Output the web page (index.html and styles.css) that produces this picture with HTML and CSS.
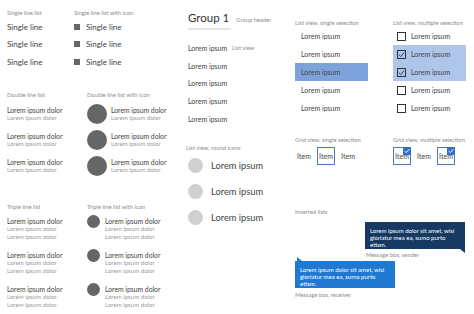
FILE: index.html
```html
<!DOCTYPE html>
<html lang="en">
<head>
    <meta charset="UTF-8">
    <title>List controls</title>
    <link rel="stylesheet" href="styles.css">
</head>
<body>
    <div class="col col-lists">
        <div class="section single">
            <div class="sub">
                <div class="label">Single line list</div>
                <div class="s-item">Single line</div>
                <div class="s-item">Single line</div>
                <div class="s-item">Single line</div>
            </div>
            <div class="sub sub-icon-sq">
                <div class="label">Single line list with icon</div>
                <div class="s-item"><span class="sq"></span>Single line</div>
                <div class="s-item"><span class="sq"></span>Single line</div>
                <div class="s-item"><span class="sq"></span>Single line</div>
            </div>
        </div>

        <div class="section double">
            <div class="sub">
                <div class="label">Double line list</div>
                <div class="d-item"><div><div class="t1">Lorem ipsum dolor</div><div class="t2">Lorem ipsum dolor</div></div></div>
                <div class="d-item"><div><div class="t1">Lorem ipsum dolor</div><div class="t2">Lorem ipsum dolor</div></div></div>
                <div class="d-item"><div><div class="t1">Lorem ipsum dolor</div><div class="t2">Lorem ipsum dolor</div></div></div>
            </div>
            <div class="sub sub-icon">
                <div class="label">Double line list with icon</div>
                <div class="d-item"><span class="dot big"></span><div><div class="t1">Lorem ipsum dolor</div><div class="t2">Lorem ipsum dolor</div></div></div>
                <div class="d-item"><span class="dot big"></span><div><div class="t1">Lorem ipsum dolor</div><div class="t2">Lorem ipsum dolor</div></div></div>
                <div class="d-item"><span class="dot big"></span><div><div class="t1">Lorem ipsum dolor</div><div class="t2">Lorem ipsum dolor</div></div></div>
            </div>
        </div>

        <div class="section triple">
            <div class="sub">
                <div class="label">Triple line list</div>
                <div class="t-item"><div><div class="t1">Lorem ipsum dolor</div><div class="t2">Lorem ipsum dolor</div><div class="t2">Lorem ipsum dolor</div></div></div>
                <div class="t-item"><div><div class="t1">Lorem ipsum dolor</div><div class="t2">Lorem ipsum dolor</div><div class="t2">Lorem ipsum dolor</div></div></div>
                <div class="t-item"><div><div class="t1">Lorem ipsum dolor</div><div class="t2">Lorem ipsum dolor</div><div class="t2">Lorem ipsum dolor</div></div></div>
            </div>
            <div class="sub sub-icon">
                <div class="label">Triple line list with icon</div>
                <div class="t-item"><span class="dot small"></span><div><div class="t1">Lorem ipsum dolor</div><div class="t2">Lorem ipsum dolor</div><div class="t2">Lorem ipsum dolor</div></div></div>
                <div class="t-item"><span class="dot small"></span><div><div class="t1">Lorem ipsum dolor</div><div class="t2">Lorem ipsum dolor</div><div class="t2">Lorem ipsum dolor</div></div></div>
                <div class="t-item"><span class="dot small"></span><div><div class="t1">Lorem ipsum dolor</div><div class="t2">Lorem ipsum dolor</div><div class="t2">Lorem ipsum dolor</div></div></div>
            </div>
        </div>
    </div>

    <div class="col col-group">
        <div class="group-head">
            <div class="group-title">Group 1</div>
            <div class="label">Group header</div>
        </div>
        <div class="list-view">
            <div class="lv-items">
                <div class="lv-item">Lorem ipsum</div>
                <div class="lv-item">Lorem ipsum</div>
                <div class="lv-item">Lorem ipsum</div>
                <div class="lv-item">Lorem ipsum</div>
                <div class="lv-item">Lorem ipsum</div>
            </div>
            <div class="label">List view</div>
        </div>
        <div class="round-list">
            <div class="label">List view, round icons</div>
            <div class="r-item"><span class="r-dot"></span>Lorem ipsum</div>
            <div class="r-item"><span class="r-dot"></span>Lorem ipsum</div>
            <div class="r-item"><span class="r-dot"></span>Lorem ipsum</div>
        </div>
    </div>

    <div class="col col-select">
        <div class="select-row">
            <div class="sel single-sel">
                <div class="label">List view, single selection</div>
                <div class="sel-item">Lorem ipsum</div>
                <div class="sel-item">Lorem ipsum</div>
                <div class="sel-item active">Lorem ipsum</div>
                <div class="sel-item">Lorem ipsum</div>
                <div class="sel-item">Lorem ipsum</div>
            </div>
            <div class="sel multi-sel">
                <div class="label">List view, multiple selection</div>
                <div class="sel-item"><span class="cb"></span>Lorem ipsum</div>
                <div class="sel-item picked"><span class="cb"><svg viewBox="0 0 10 10"><path d="M2 5.2 L4.2 7.3 L8 2.8" fill="none" stroke="#2b3f63" stroke-width="1.1"/></svg></span>Lorem ipsum</div>
                <div class="sel-item picked"><span class="cb"><svg viewBox="0 0 10 10"><path d="M2 5.2 L4.2 7.3 L8 2.8" fill="none" stroke="#2b3f63" stroke-width="1.1"/></svg></span>Lorem ipsum</div>
                <div class="sel-item"><span class="cb"></span>Lorem ipsum</div>
                <div class="sel-item"><span class="cb"></span>Lorem ipsum</div>
            </div>
        </div>

        <div class="select-row grid-row">
            <div class="sel">
                <div class="label">Grid view, single selection</div>
                <div class="grid-items">
                    <span class="g-item">Item</span>
                    <span class="g-item boxed">Item</span>
                    <span class="g-item">Item</span>
                </div>
            </div>
            <div class="sel multi-sel">
                <div class="label">Grid view, multiple selection</div>
                <div class="grid-items">
                    <span class="g-item boxed checked">Item<span class="g-check"><svg viewBox="0 0 8 8"><path d="M1.6 4 L3.3 5.6 L6.4 2.2" fill="none" stroke="#fff" stroke-width="1"/></svg></span></span>
                    <span class="g-item">Item</span>
                    <span class="g-item boxed checked">Item<span class="g-check"><svg viewBox="0 0 8 8"><path d="M1.6 4 L3.3 5.6 L6.4 2.2" fill="none" stroke="#fff" stroke-width="1"/></svg></span></span>
                </div>
            </div>
        </div>

        <div class="inverted">
            <div class="label">Inverted lists</div>
            <div class="msg sender">
                <div class="bubble">Lorem ipsum dolor sit amet, wisi<br>gloriatur mea ea, sumo purto<br>etiam.</div>
                <div class="label">Message box, sender</div>
            </div>
            <div class="msg receiver">
                <div class="bubble">Lorem ipsum dolor sit amet, wisi<br>gloriatur mea ea, sumo purto<br>etiam.</div>
                <div class="label">Message box, receiver</div>
            </div>
        </div>
    </div>
</body>
</html>
```

FILE: styles.css
```css
body {
    margin: 0;
    width: 474px;
    height: 314px;
    background: #fff;
    font-family: Lato, "Open Sans", sans-serif;
    color: #444;
    display: flex;
    overflow: hidden;
    white-space: nowrap;
}

.col {
    flex: none;
}

.label {
    font-size: 5.8px;
    color: #8c8c8c;
    line-height: 8px;
}

.col-lists {
    width: 180px;
    padding-left: 7px;
    box-sizing: border-box;
}

.section {
    display: flex;
}

.sub {
    width: 79px;
}

/* single line */
.single {
    padding-top: 9px;
    height: 86px;
    box-sizing: border-box;
}
.single .sub:first-child {
    width: 67px;
}
.s-item {
    font-size: 8px;
    height: 17.5px;
    display: flex;
    align-items: center;
}
.single .label {
    margin-bottom: 1px;
}
.sq {
    width: 6px;
    height: 6px;
    background: #666;
    margin-right: 6px;
}

/* double line */
.double {
    height: 117px;
    padding-top: 5px;
    box-sizing: border-box;
}
.double .label {
    margin-bottom: 2px;
}
.d-item {
    display: flex;
    align-items: center;
    height: 26px;
}
.t1 {
    font-size: 6.8px;
    line-height: 8px;
    color: #444;
}
.t2 {
    font-size: 6.1px;
    line-height: 7.6px;
    color: #9a9a9a;
}
.dot {
    border-radius: 50%;
    background: #666;
    flex: none;
}
.dot.big {
    width: 20px;
    height: 20px;
    margin-right: 4px;
}
.dot.small {
    width: 13px;
    height: 13px;
    margin-right: 5px;
    margin-top: -2.5px;
}
.sub-icon {
    padding-left: 1px;
}

/* triple line */
.triple .label {
    margin-bottom: 6px;
}
.t-item {
    display: flex;
    height: 34px;
}

/* group column */
.col-group {
    width: 109px;
    padding-left: 8px;
    box-sizing: border-box;
}
.group-head {
    display: flex;
    align-items: center;
    padding-top: 10px;
}
.group-title {
    font-size: 11.5px;
    line-height: 16px;
    color: #333;
    border-bottom: 2px solid #e6e6e6;
    padding-bottom: 2px;
    padding-right: 2px;
    margin-right: 5px;
}
.list-view {
    display: flex;
    margin-top: 14px;
}
.list-view .label {
    margin-left: 4px;
}
.lv-items {
    width: 40px;
}
.lv-item {
    font-size: 7px;
    height: 17.7px;
    line-height: 8px;
}
.round-list {
    margin-top: 12px;
    margin-left: -2px;
}
.r-item {
    display: flex;
    align-items: center;
    font-size: 9.3px;
    height: 26px;
    margin-left: 2px;
}
.round-list .label {
    margin-bottom: 0;
}
.r-dot {
    width: 15px;
    height: 15px;
    border-radius: 50%;
    background: #d0d0d0;
    margin-right: 8px;
}

/* selection column */
.col-select {
    width: 178px;
    padding-left: 6px;
    padding-top: 19px;
}
.select-row {
    display: flex;
}
.sel {
    width: 98px;
}
.sel.multi-sel {
    width: 80px;
}
.sel .label {
    margin-bottom: 0;
}
.sel-item {
    font-size: 7px;
    height: 18px;
    display: flex;
    align-items: center;
    padding-left: 6px;
    width: 67px;
}
.sel-item.active {
    background: #7ea3dc;
}
.multi-sel .sel-item {
    padding-left: 4px;
    width: 69px;
}
.sel-item.picked {
    background: #adc6ea;
}
.cb {
    width: 9px;
    height: 9px;
    border: 1px solid #333;
    margin-right: 5px;
    box-sizing: border-box;
    display: flex;
}
.cb svg {
    width: 9px;
    height: 9px;
    margin: -1px;
}

/* grid */
.grid-row {
    margin-top: 19px;
}
.grid-row .label {
    margin-bottom: 3px;
}
.grid-items {
    display: flex;
    align-items: center;
    gap: 4px;
    font-size: 7px;
}
.g-item {
    position: relative;
    height: 18px;
    width: 18px;
    display: flex;
    align-items: center;
    justify-content: center;
    box-sizing: border-box;
}
.g-item.boxed {
    border: 1px solid #4a78c4;
}
.g-check {
    position: absolute;
    right: -1px;
    top: -1px;
    width: 8px;
    height: 8px;
    background: #2f6fc9;
    display: flex;
}
.g-check svg {
    width: 8px;
    height: 8px;
}

/* inverted */
.inverted {
    margin-top: 43px;
}
.bubble {
    position: relative;
    font-size: 6px;
    line-height: 7px;
    color: #fff;
    padding: 5px 0 0 5px;
    width: 100px;
    height: 27px;
    box-sizing: border-box;
}
.sender {
    margin-left: 70px;
    margin-top: 6px;
}
.sender .bubble {
    background: #173a63;
}
.sender .bubble::after {
    content: "";
    position: absolute;
    right: 0;
    bottom: -4px;
    border-top: 4px solid #173a63;
    border-left: 5px solid transparent;
}
.sender .label {
    margin-top: 2px;
    margin-left: 1px;
}
.receiver {
    margin-top: 2px;
}
.receiver .bubble {
    background: #1f78d1;
}
.receiver .bubble::before {
    content: "";
    position: absolute;
    left: 2px;
    top: -4px;
    border-bottom: 4px solid #1f78d1;
    border-right: 5px solid transparent;
}
.receiver .label {
    margin-top: 3px;
}
```
